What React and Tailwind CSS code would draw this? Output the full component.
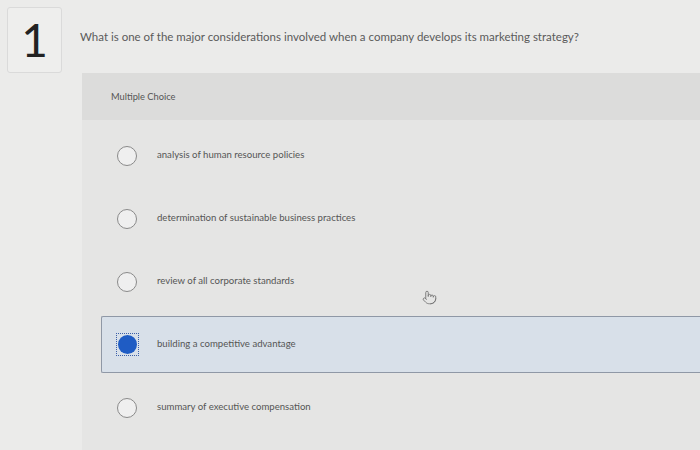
import React from "react";
import { Pointer } from "lucide-react";

const options = [
  "analysis of human resource policies",
  "determination of sustainable business practices",
  "review of all corporate standards",
  "building a competitive advantage",
  "summary of executive compensation",
];

export default function App() {
  return (
    <div
      className="relative w-[700px] h-[450px] overflow-hidden bg-[#ebebea] text-[#555]"
      style={{ fontFamily: "Lato, 'Open Sans', sans-serif" }}
    >
      <div className="flex h-full">
        <div className="w-[82px] shrink-0 pl-[7px] pt-[7px]">
          <div className="w-[55px] h-[66px] border border-[#dadada] rounded-[3px] bg-[#eeeeed] flex items-center justify-center text-[46px] font-normal text-[#222] leading-none">
            1
          </div>
        </div>
        <div className="flex-1 flex flex-col">
          <div className="h-[73px] pt-[28px] -ml-[2px] text-[11.5px] text-[#5a5a5a]">
            What is one of the major considerations involved when a company develops its marketing strategy?
          </div>
          <div className="flex-1 bg-[#e5e5e4]">
            <div className="h-[47px] bg-[#dcdcdb] flex items-center pl-[29px] pt-[1px] text-[9.3px] text-[#555]">
              Multiple Choice
            </div>
            <div className="flex flex-col gap-[6px] pt-[7px] pl-[19px]">
              {options.map((o, i) => {
                const sel = i === 3;
                return (
                  <div
                    key={o}
                    className={
                      sel
                        ? "h-[57px] flex items-center bg-[#d8e0e9] border border-r-0 border-[#8f98a6] rounded-l-[2px]"
                        : "h-[57px] flex items-center border border-transparent"
                    }
                  >
                    <div className="w-[48px] pl-[14px] flex items-center">
                      {sel ? (
                        <div className="w-[23px] h-[23px] border border-dotted border-[#3b5fa8] flex items-center justify-center">
                          <div className="w-[19px] h-[19px] rounded-full bg-[#1f5cc4]" />
                        </div>
                      ) : (
                        <div className="ml-[1px] w-[20px] h-[20px] rounded-full border-[1.5px] border-[#8a8a8a] bg-[#efefef]" />
                      )}
                    </div>
                    <div className="pl-[7px] text-[9.6px] text-[#555]">{o}</div>
                  </div>
                );
              })}
            </div>
          </div>
        </div>
      </div>
      <div className="absolute left-[422px] top-[290px] text-[#777]">
        <Pointer size={15} strokeWidth={1.5} />
      </div>
    </div>
  );
}
